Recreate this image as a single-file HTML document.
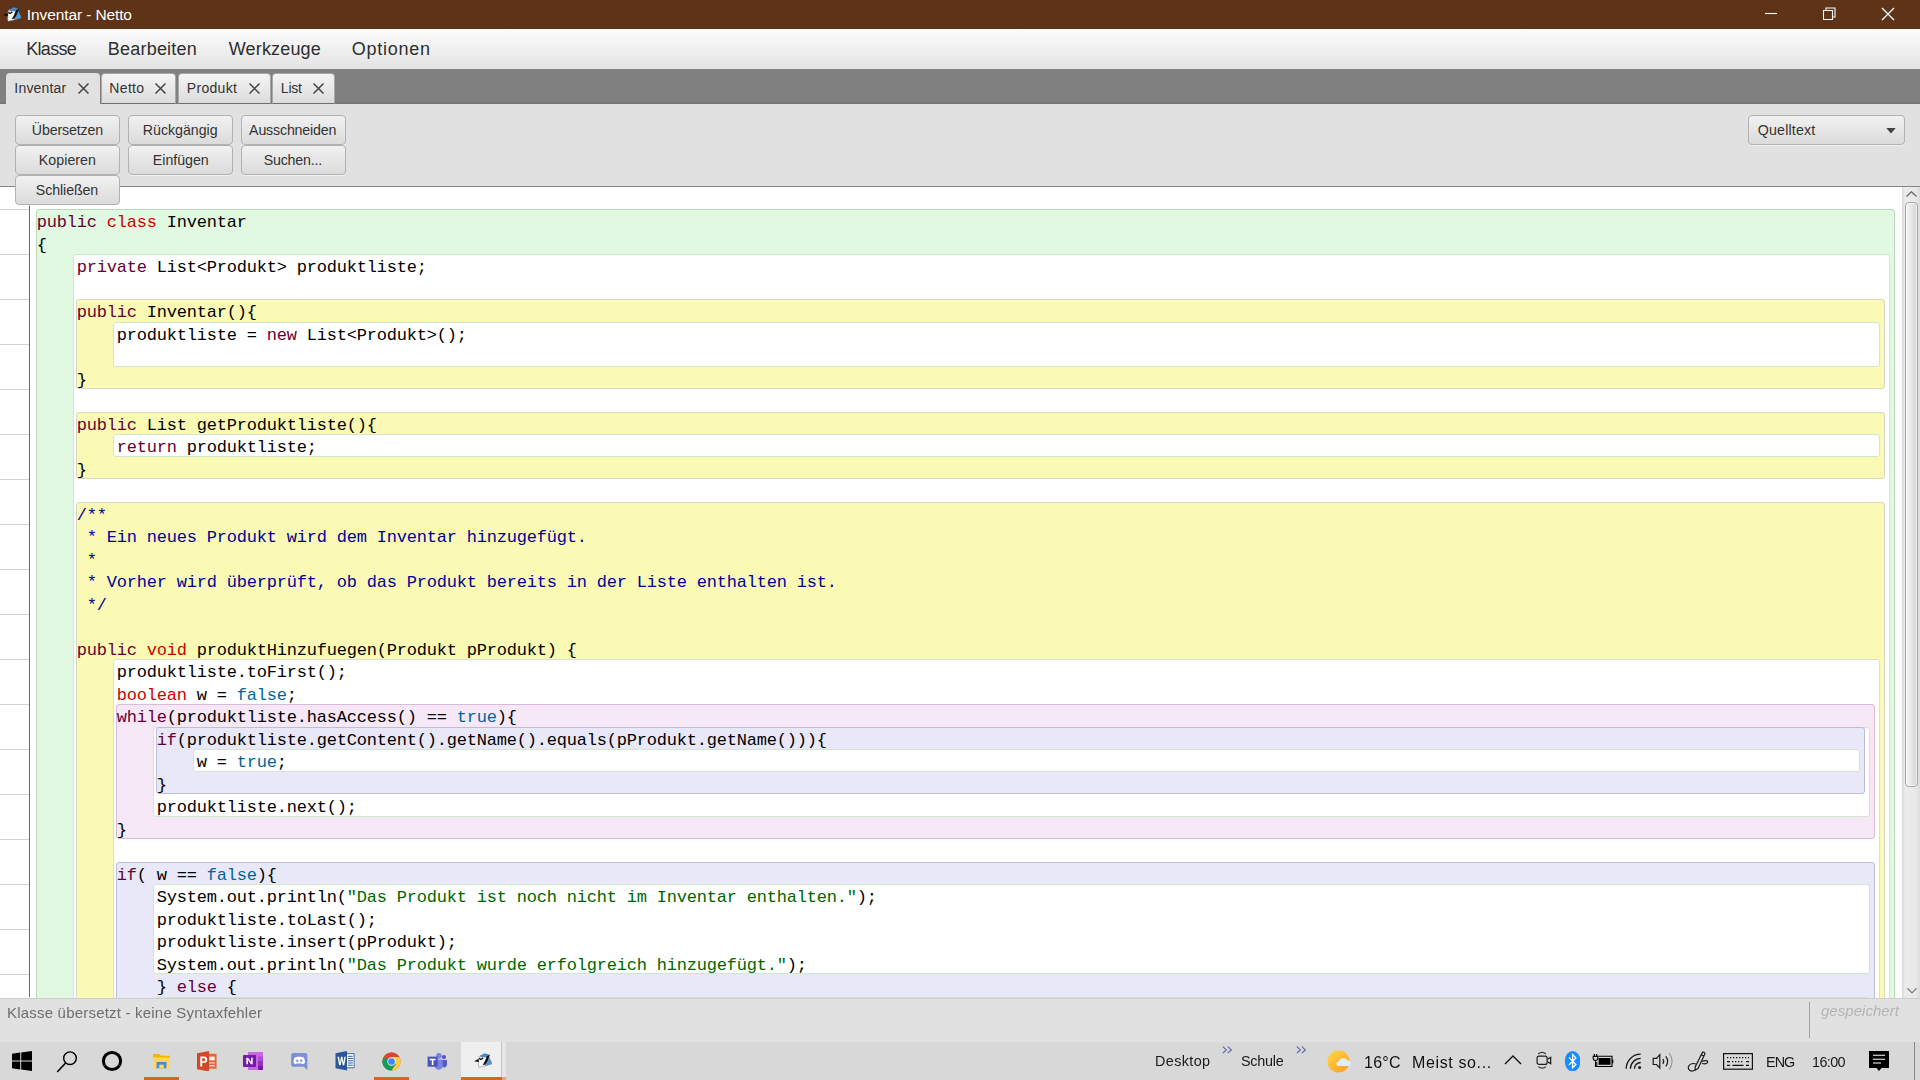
<!DOCTYPE html>
<html><head><meta charset="utf-8"><title>Inventar - Netto</title>
<style>
*{box-sizing:border-box;margin:0;padding:0}
html,body{width:1920px;height:1080px;overflow:hidden;background:#fff;font-family:"Liberation Sans",sans-serif}
.abs{position:absolute}
#title{position:absolute;left:0;top:0;width:1920px;height:29px;background:#5e3317;color:#fff}
#title .t{position:absolute;left:27px;top:4px;font-size:15.5px;line-height:20px;white-space:nowrap}
#menu{position:absolute;left:0;top:29px;width:1920px;height:40px;background:linear-gradient(#fdfdfd,#e3e3e3)}
#menu span{position:absolute;top:7px;font-size:18px;line-height:24px;color:#323232;white-space:nowrap}
#tabs{position:absolute;left:0;top:69px;width:1920px;height:35px;background:linear-gradient(#808080 33px,#757575 34px)}
.tab{position:absolute;top:4px;height:31px;border:1px solid #a8a8a8;border-bottom:1px solid #6e6e6e;border-radius:4px 4px 0 0;background:linear-gradient(#f4f4f4,#dcdcdc);font-size:13.5px;color:#3a3a3a;white-space:nowrap}
.tab.sel{background:#e1e1e1;border:none;height:32px}
.tab span{position:absolute;top:7px;line-height:16px}
.tab svg{position:absolute;top:9px}
.tab.sel svg{top:10px}
#tool{position:absolute;left:0;top:104px;width:1920px;height:83px;background:#e1e1e1;border-bottom:1px solid #858585}
.btn{position:absolute;width:105px;height:30px;border:1px solid #b2b2b2;border-radius:4px;background:linear-gradient(#f1f1f1,#dbdbdb);font-size:13.5px;color:#333;text-align:center;line-height:27px;white-space:nowrap;box-shadow:0 1px 0 rgba(255,255,255,.55)}
#editor{position:absolute;left:0;top:187px;width:1902px;height:811px;background:#fff;overflow:hidden}
#code{position:absolute;left:0;top:0;font-family:"Liberation Mono",monospace;font-size:17px;letter-spacing:-0.20166px;line-height:22.5px;white-space:pre;color:#000}
.ln{position:absolute;left:36.7px;height:22.5px}
.k1{color:#660033}.k2{color:#cc0000}.k3{color:#006699}.cm{color:#000099}.st{color:#006600}
.sc{position:absolute;border:1px solid;border-radius:3px}
#sb{position:absolute;left:1902px;top:187px;width:18px;height:811px;background:linear-gradient(90deg,#d8d8d8,#ececec 3px,#e8e8e8 14px,#dcdcdc);}
#thumb{position:absolute;left:3px;top:15px;width:13px;height:585px;border:1px solid #a6a6a6;border-radius:4px;box-shadow:inset 0 0 0 1px rgba(255,255,255,.65);background:linear-gradient(90deg,#f6f6f6,#e2e2e2 60%,#d6d6d6)}
#status{position:absolute;left:0;top:998px;width:1920px;height:44px;background:#e1e1e1;border-top:1px solid #cdcdcd}
#status .m{position:absolute;left:8px;top:6px;font-size:15px;line-height:18px;color:#6e6e6e;white-space:nowrap}
#status .s{position:absolute;left:1820px;top:4px;font-size:15px;line-height:18px;color:#b0b0b0;font-style:italic;white-space:nowrap}
#task{position:absolute;left:0;top:1040px;width:1920px;height:40px;background:linear-gradient(#e1e1e1 2px,#d8d8d8 2px)}
#task .tx{position:absolute;color:#1a1a1a;white-space:nowrap}
.fx{position:absolute;line-height:40px;white-space:pre;font-family:"Liberation Sans",sans-serif}
.g{-webkit-font-smoothing:antialiased;will-change:transform}
.ul{position:absolute;top:37px;height:3px;background:#cd6a27}
#root{position:absolute;left:0;top:0;width:1920px;height:1080px;overflow:hidden;background:#fff}
</style></head><body>
<div id="root">
<div id="title">
<svg class="abs" style="left:2.7px;top:7px" width="18.8" height="14.6" viewBox="0 0 18.6 14.6"><path d="M5.5 3.2 L9.5 2 L14.5 2.8 L12 8 L11 13 L4.8 14.2 L4.5 10 L5 9 L4.4 6.4 Z" fill="#fff" stroke="#777" stroke-width="0.5"/><path d="M5.7 3.1 L10.5 0.2 L15.6 1.8 L12.6 4.4 L7 3.9 Z" fill="#4a86c4"/><path d="M14.8 3 L18.6 11.1 L10.9 13.3 L12.2 8.5 Z" fill="#5b93c6"/><path d="M16.1 1.4 L15.1 3.8 L13.3 8.4 L11.1 11.5 L8.6 12.3 L11 8 L12.8 3.6 Z" fill="#0c0c0c"/><path d="M0 8.2 L4.4 6.1 L5 9 Z" fill="#0c0c0c"/><path d="M4.4 6.3 L6 4.5 L7 5.9 L8.4 4.2 L9.7 5.4 L8.5 6.3 L7 7.2 L5.6 6.4 Z" fill="#0c0c0c"/></svg>

<svg class="abs" style="left:1760px;top:0" width="160" height="29" viewBox="0 0 160 29" fill="none" stroke="#fff" stroke-width="1.1"><path d="M5 13.5 H17"/><path d="M63.5 10.5 H72.5 V19.5 H63.5 Z M66 10.5 V8 H75 V17 H72.5"/><path d="M122 8 L134 20 M134 8 L122 20" stroke-width="1.3"/></svg>
</div>
<div id="menu"></div>
<div id="tabs">
<div class="tab sel" style="left:6px;width:94px"><svg style="left:72px" width="11" height="11" viewBox="0 0 11 11"><path d="M0.5 0.5 L10.5 10.5 M10.5 0.5 L0.5 10.5" stroke="#444" stroke-width="1.5"/></svg></div>
<div class="tab" style="left:101px;width:75px"><svg style="left:53px" width="11" height="11" viewBox="0 0 11 11"><path d="M0.5 0.5 L10.5 10.5 M10.5 0.5 L0.5 10.5" stroke="#444" stroke-width="1.5"/></svg></div>
<div class="tab" style="left:178px;width:93px"><svg style="left:70px" width="11" height="11" viewBox="0 0 11 11"><path d="M0.5 0.5 L10.5 10.5 M10.5 0.5 L0.5 10.5" stroke="#444" stroke-width="1.5"/></svg></div>
<div class="tab" style="left:272px;width:63px"><svg style="left:40px" width="11" height="11" viewBox="0 0 11 11"><path d="M0.5 0.5 L10.5 10.5 M10.5 0.5 L0.5 10.5" stroke="#444" stroke-width="1.5"/></svg></div>
</div>
<div id="tool">
<div class="abs" style="left:1748px;top:11px;width:157px;height:30px;border:1px solid #b2b2b2;border-radius:4px;background:linear-gradient(#f1f1f1,#dbdbdb);font-size:13.5px;color:#333;line-height:28px;padding-left:9px;box-shadow:0 1px 0 rgba(255,255,255,.55)"><svg class="abs" style="left:137px;top:12px" width="10" height="6" viewBox="0 0 10 6"><path d="M0.3 0 H9.7 L5 5.6 Z" fill="#444"/></svg></div>
</div>
<div class="btn" style="left:15px;top:115px"></div>
<div class="btn" style="left:128px;top:115px"></div>
<div class="btn" style="left:241px;top:115px"></div>
<div class="btn" style="left:15px;top:145px"></div>
<div class="btn" style="left:128px;top:145px"></div>
<div class="btn" style="left:241px;top:145px"></div>
<div id="editor">
<div class="abs" style="left:0;top:22px;width:29px;height:1px;background:#d4d4d4"></div>
<div class="abs" style="left:0;top:67px;width:29px;height:1px;background:#d4d4d4"></div>
<div class="abs" style="left:0;top:112px;width:29px;height:1px;background:#d4d4d4"></div>
<div class="abs" style="left:0;top:157px;width:29px;height:1px;background:#d4d4d4"></div>
<div class="abs" style="left:0;top:202px;width:29px;height:1px;background:#d4d4d4"></div>
<div class="abs" style="left:0;top:247px;width:29px;height:1px;background:#d4d4d4"></div>
<div class="abs" style="left:0;top:292px;width:29px;height:1px;background:#d4d4d4"></div>
<div class="abs" style="left:0;top:337px;width:29px;height:1px;background:#d4d4d4"></div>
<div class="abs" style="left:0;top:382px;width:29px;height:1px;background:#d4d4d4"></div>
<div class="abs" style="left:0;top:427px;width:29px;height:1px;background:#d4d4d4"></div>
<div class="abs" style="left:0;top:472px;width:29px;height:1px;background:#d4d4d4"></div>
<div class="abs" style="left:0;top:517px;width:29px;height:1px;background:#d4d4d4"></div>
<div class="abs" style="left:0;top:562px;width:29px;height:1px;background:#d4d4d4"></div>
<div class="abs" style="left:0;top:607px;width:29px;height:1px;background:#d4d4d4"></div>
<div class="abs" style="left:0;top:652px;width:29px;height:1px;background:#d4d4d4"></div>
<div class="abs" style="left:0;top:697px;width:29px;height:1px;background:#d4d4d4"></div>
<div class="abs" style="left:0;top:742px;width:29px;height:1px;background:#d4d4d4"></div>
<div class="abs" style="left:0;top:787px;width:29px;height:1px;background:#d4d4d4"></div>
<div class="abs" style="left:29px;top:0;width:1px;height:810px;background:#6a6a6a"></div>
<div class="sc" style="left:36px;top:22px;width:1859px;height:900px;background:#e1f8e1;border-color:#b9d9b9"></div>
<div class="sc" style="left:73px;top:67px;width:1817px;height:855px;background:#ffffff;border-color:#cfe6cf"></div>
<div class="sc" style="left:76px;top:112px;width:1809px;height:90px;background:#fafab4;border-color:#d7d7c3"></div>
<div class="sc" style="left:113px;top:135px;width:1767px;height:45px;background:#ffffff;border-color:#cfe6cf"></div>
<div class="sc" style="left:76px;top:225px;width:1809px;height:67px;background:#fafab4;border-color:#d7d7c3"></div>
<div class="sc" style="left:113px;top:247px;width:1767px;height:23px;background:#ffffff;border-color:#cfe6cf"></div>
<div class="sc" style="left:76px;top:315px;width:1809px;height:607px;background:#fafab4;border-color:#d7d7c3"></div>
<div class="sc" style="left:113px;top:472px;width:1767px;height:450px;background:#ffffff;border-color:#cfe6cf"></div>
<div class="sc" style="left:116px;top:517px;width:1759px;height:135px;background:#f7e8f8;border-color:#d8bbd8"></div>
<div class="sc" style="left:153px;top:540px;width:1717px;height:90px;background:#ffffff;border-color:#cfe6cf"></div>
<div class="sc" style="left:156px;top:540px;width:1709px;height:67px;background:#e8e8f8;border-color:#bcbcdc"></div>
<div class="sc" style="left:193px;top:562px;width:1667px;height:23px;background:#ffffff;border-color:#cfe6cf"></div>
<div class="sc" style="left:116px;top:675px;width:1759px;height:247px;background:#e8e8f8;border-color:#bcbcdc"></div>
<div class="sc" style="left:153px;top:697px;width:1717px;height:90px;background:#ffffff;border-color:#cfe6cf"></div>
<div class="sc" style="left:153px;top:810px;width:1717px;height:112px;background:#ffffff;border-color:#cfe6cf"></div>
<div id="code"><div class="ln" style="top:25.20px"><span class="k1">public</span> <span class="k2">class</span> Inventar</div>
<div class="ln" style="top:47.70px">{</div>
<div class="ln" style="top:70.20px">    <span class="k1">private</span> List&lt;Produkt&gt; produktliste;</div>
<div class="ln" style="top:92.70px"></div>
<div class="ln" style="top:115.20px">    <span class="k1">public</span> Inventar(){</div>
<div class="ln" style="top:137.70px">        produktliste = <span class="k1">new</span> List&lt;Produkt&gt;();</div>
<div class="ln" style="top:160.20px"></div>
<div class="ln" style="top:182.70px">    }</div>
<div class="ln" style="top:205.20px"></div>
<div class="ln" style="top:227.70px">    <span class="k1">public</span> List getProduktliste(){</div>
<div class="ln" style="top:250.20px">        <span class="k1">return</span> produktliste;</div>
<div class="ln" style="top:272.70px">    }</div>
<div class="ln" style="top:295.20px"></div>
<div class="ln" style="top:317.70px"><span class="cm">    /**</span></div>
<div class="ln" style="top:340.20px"><span class="cm">     * Ein neues Produkt wird dem Inventar hinzugefügt.</span></div>
<div class="ln" style="top:362.70px"><span class="cm">     * </span></div>
<div class="ln" style="top:385.20px"><span class="cm">     * Vorher wird überprüft, ob das Produkt bereits in der Liste enthalten ist.</span></div>
<div class="ln" style="top:407.70px"><span class="cm">     */</span></div>
<div class="ln" style="top:430.20px"></div>
<div class="ln" style="top:452.70px">    <span class="k1">public</span> <span class="k2">void</span> produktHinzufuegen(Produkt pProdukt) {</div>
<div class="ln" style="top:475.20px">        produktliste.toFirst();</div>
<div class="ln" style="top:497.70px">        <span class="k2">boolean</span> w = <span class="k3">false</span>;</div>
<div class="ln" style="top:520.20px">        <span class="k1">while</span>(produktliste.hasAccess() == <span class="k3">true</span>){</div>
<div class="ln" style="top:542.70px">            <span class="k1">if</span>(produktliste.getContent().getName().equals(pProdukt.getName())){</div>
<div class="ln" style="top:565.20px">                w = <span class="k3">true</span>;</div>
<div class="ln" style="top:587.70px">            }</div>
<div class="ln" style="top:610.20px">            produktliste.next();</div>
<div class="ln" style="top:632.70px">        }</div>
<div class="ln" style="top:655.20px"></div>
<div class="ln" style="top:677.70px">        <span class="k1">if</span>( w == <span class="k3">false</span>){</div>
<div class="ln" style="top:700.20px">            System.out.println(<span class="st">"Das Produkt ist noch nicht im Inventar enthalten."</span>);</div>
<div class="ln" style="top:722.70px">            produktliste.toLast();</div>
<div class="ln" style="top:745.20px">            produktliste.insert(pProdukt);</div>
<div class="ln" style="top:767.70px">            System.out.println(<span class="st">"Das Produkt wurde erfolgreich hinzugefügt."</span>);</div>
<div class="ln" style="top:790.20px">            } <span class="k1">else</span> {</div>
<div class="ln" style="top:812.70px">                System.out.println(<span class="st">"x"</span>);</div></div>
</div>
<div class="btn" style="left:15px;top:175px"></div>
<div id="sb">
<svg class="abs" style="left:4px;top:4px" width="11" height="6" viewBox="0 0 11 6"><path d="M0.5 5.5 L5.5 0.7 L10.5 5.5" fill="none" stroke="#666" stroke-width="1.2"/></svg>
<div id="thumb"></div>
<svg class="abs" style="left:4.5px;top:801px" width="10" height="5.5" viewBox="0 0 11 6"><path d="M0.5 0.5 L5.5 5.3 L10.5 0.5" fill="none" stroke="#666" stroke-width="1.2"/></svg>
</div>
<div id="status"><div class="abs" style="left:1809px;top:3px;width:1px;height:36px;background:#a4a4a4"></div></div>
<div id="task">
<div class="abs" style="left:461px;top:2px;width:41px;height:38px;background:#efefef;border-right:1px solid #c4c4c4"></div>
<div class="abs" style="left:502px;top:2px;width:4px;height:38px;background:#e6e6e6"></div>
<div class="ul" style="left:144px;width:35px"></div>
<div class="ul" style="left:374px;width:35px"></div>
<div class="ul" style="left:461px;width:41px"></div><div class="ul" style="left:502px;width:4px;background:#e9a378"></div>
<!-- start -->
<svg class="abs" style="left:12px;top:11px" width="20" height="20" viewBox="0 0 20 20"><path d="M0 2.8 L8.2 1.6 V9.5 H0 Z M9.2 1.5 L20 0 V9.5 H9.2 Z M0 10.5 H8.2 V18.4 L0 17.2 Z M9.2 10.5 H20 V20 L9.2 18.5 Z" fill="#000"/></svg>
<!-- search -->
<svg class="abs" style="left:56px;top:10px" width="22" height="23" viewBox="0 0 22 23"><circle cx="14" cy="8.2" r="6.3" fill="none" stroke="#000" stroke-width="1.4"/><path d="M9.6 13 L1.2 22" stroke="#000" stroke-width="1.6"/></svg>
<!-- cortana -->
<svg class="abs" style="left:101px;top:10px" width="22" height="22" viewBox="0 0 22 22"><circle cx="11" cy="11" r="8.6" fill="none" stroke="#000" stroke-width="3"/></svg>
<!-- explorer -->
<svg class="abs" style="left:151.5px;top:12.5px" width="19" height="17" viewBox="0 0 21 19"><path d="M1 1 H8 L10 3 H20 V17 H1 Z" fill="#f4b400"/><path d="M1 5 H20 V17 H1 Z" fill="#ffd75e"/><path d="M5 10 H16 V17 H5 Z" fill="#3a8ee6"/><path d="M8 13 H13 V17 H8 Z" fill="#ffd75e"/></svg>
<!-- powerpoint -->
<svg class="abs" style="left:197px;top:10.5px" width="20.5" height="20.5" viewBox="0 0 22 22"><path d="M11 3 H21 V19 H11 Z" fill="#e8623a"/><path d="M13 6 H19 V10 H13 Z" fill="#fff" opacity=".9"/><path d="M13 12 H19 V13.5 H13 Z M13 15 H19 V16.5 H13 Z" fill="#fff" opacity=".8"/><path d="M0 2.5 L13 0 V22 L0 19.5 Z" fill="#d24726"/><path d="M3.5 6 H7.5 C10 6 11 7.5 11 9.3 C11 11.3 9.7 12.7 7.5 12.7 H5.6 V16.5 H3.5 Z M5.6 7.8 V10.9 H7.2 C8.3 10.9 8.8 10.2 8.8 9.3 C8.8 8.4 8.3 7.8 7.2 7.8 Z" fill="#fff"/></svg>
<!-- onenote -->
<svg class="abs" style="left:243px;top:12px" width="20" height="18" viewBox="0 0 20 18"><path d="M5 0 H20 V18 H5 Z" fill="#c768e0"/><path d="M15 0 H20 V4.5 H15 Z" fill="#ca64ea"/><path d="M15 4.5 H20 V9 H15 Z" fill="#ae4bd5"/><path d="M15 9 H20 V13.5 H15 Z" fill="#9332bf"/><path d="M15 13.5 H20 V18 H15 Z" fill="#7719aa"/><rect x="0" y="3" width="13" height="12" rx="0.8" fill="#7719aa"/><path d="M3.3 12.3 V5.7 H5.2 L8 10 V5.7 H9.7 V12.3 H7.9 L5 8 V12.3 Z" fill="#fff"/></svg>
<!-- discord -->
<svg class="abs" style="left:291px;top:13px" width="16.5" height="17" viewBox="0 0 20 21"><path d="M2.5 0 H17.5 C19 0 20 1 20 2.5 V21 L15.5 17 H2.5 C1 17 0 16 0 14.5 V2.5 C0 1 1 0 2.5 0 Z" fill="#7f8fd6"/><path d="M4.5 5.5 C6.5 4.3 13.5 4.3 15.5 5.5 C16.8 7.5 17.2 10 17 12.3 C15.8 13.2 14.8 13.6 13.8 13.8 L13 12.6 C11.2 13.1 8.8 13.1 7 12.6 L6.2 13.8 C5.2 13.6 4.2 13.2 3 12.3 C2.8 10 3.2 7.5 4.5 5.5 Z" fill="#fff"/><ellipse cx="7.6" cy="9.6" rx="1.4" ry="1.6" fill="#7f8fd6"/><ellipse cx="12.4" cy="9.6" rx="1.4" ry="1.6" fill="#7f8fd6"/></svg>
<!-- word -->
<svg class="abs" style="left:334.5px;top:11px" width="20.5" height="19.5" viewBox="0 0 22 22"><path d="M11 3 H21 V19 H11 Z" fill="#fff" stroke="#2b579a" stroke-width="1"/><path d="M14 6 H19.5 M14 8.5 H19.5 M14 11 H19.5 M14 13.5 H19.5 M14 16 H19.5" stroke="#2b579a" stroke-width="1.1"/><path d="M0 2.5 L13 0 V22 L0 19.5 Z" fill="#2b579a"/><path d="M2.2 6.5 H4 L5 13 L6.2 6.5 H7.8 L9 13 L10 6.5 H11.6 L9.9 16 H8.2 L7 9.8 L5.8 16 H4.1 Z" fill="#fff"/></svg>
<!-- chrome -->
<svg class="abs" style="left:381.5px;top:11.5px" width="19" height="19" viewBox="0 0 22 22"><circle cx="11" cy="11" r="10.5" fill="#db4437"/><path d="M11 11 L1.9 5.75 A10.5 10.5 0 0 0 11 21.5 L16.2 14 Z" fill="#0f9d58"/><path d="M11 11 L16.2 14 L11 21.5 A10.5 10.5 0 0 0 20.1 5.75 H11 Z" fill="#ffcd40"/><path d="M11 11 L1.9 5.75 A10.5 10.5 0 0 1 20.1 5.75 H11 Z" fill="#db4437"/><circle cx="11" cy="11" r="4.9" fill="#f1f1f1"/><circle cx="11" cy="11" r="3.9" fill="#4285f4"/></svg>
<!-- teams -->
<svg class="abs" style="left:427px;top:12px" width="20.5" height="18.5" viewBox="0 0 23 22"><circle cx="19.5" cy="6" r="2.5" fill="#5059c9"/><path d="M16.5 9.5 H23 V15 C23 17.5 21 18.5 19.5 18.5 C18 18.5 16.5 17.5 16.5 15 Z" fill="#5059c9"/><circle cx="13.5" cy="4.5" r="3.4" fill="#7b83eb"/><path d="M8.5 9 H18 V16 C18 19.5 15.5 21 13.2 21 C11 21 8.5 19.5 8.5 16 Z" fill="#7b83eb"/><path d="M0 5.5 H12 V17.5 H0 Z" fill="#4b53bc"/><path d="M2.5 8 H9.5 V9.8 H7 V15.5 H5 V9.8 H2.5 Z" fill="#fff"/></svg>
<!-- bluej -->
<svg class="abs" style="left:473.5px;top:13.3px" width="18.6" height="14.6" viewBox="0 0 18.6 14.6"><path d="M5.5 3.2 L9.5 2 L14.5 2.8 L12 8 L11 13 L4.8 14.2 L4.5 10 L5 9 L4.4 6.4 Z" fill="#fff" stroke="#777" stroke-width="0.5"/><path d="M5.7 3.1 L10.5 0.2 L15.6 1.8 L12.6 4.4 L7 3.9 Z" fill="#4a86c4"/><path d="M14.8 3 L18.6 11.1 L10.9 13.3 L12.2 8.5 Z" fill="#5b93c6"/><path d="M16.1 1.4 L15.1 3.8 L13.3 8.4 L11.1 11.5 L8.6 12.3 L11 8 L12.8 3.6 Z" fill="#0c0c0c"/><path d="M0 8.2 L4.4 6.1 L5 9 Z" fill="#0c0c0c"/><path d="M4.4 6.3 L6 4.5 L7 5.9 L8.4 4.2 L9.7 5.4 L8.5 6.3 L7 7.2 L5.6 6.4 Z" fill="#0c0c0c"/></svg>
<!-- right side -->
<svg class="abs" style="left:1221.5px;top:5.5px" width="11" height="8" viewBox="0 0 11 8" fill="none" stroke="#5f5fae" stroke-width="1.1"><path d="M0.8 0.6 L4.4 3.9 L0.8 7.2 M5.8 0.6 L9.4 3.9 L5.8 7.2"/></svg>
<svg class="abs" style="left:1295.5px;top:5.5px" width="11" height="8" viewBox="0 0 11 8" fill="none" stroke="#5f5fae" stroke-width="1.1"><path d="M0.8 0.6 L4.4 3.9 L0.8 7.2 M5.8 0.6 L9.4 3.9 L5.8 7.2"/></svg>
<svg class="abs" style="left:1327px;top:9px" width="27" height="25" viewBox="0 0 27 25"><defs><linearGradient id="sun" x1="0" y1="0" x2="1" y2="1"><stop offset="0" stop-color="#ffd84a"/><stop offset="1" stop-color="#ff9a1a"/></linearGradient></defs><circle cx="11.5" cy="12.5" r="11" fill="url(#sun)"/><path d="M12 17 C8.5 17 8.5 12.5 12 12.5 C12.5 8.5 18.5 7.5 20.5 11.5 C25 11.5 25 17 21 17 Z" fill="#dfeefa"/></svg>
<svg class="abs" style="left:1504px;top:15px" width="18" height="10" viewBox="0 0 18 10"><path d="M1 9 L9 1 L17 9" fill="none" stroke="#111" stroke-width="1.4"/></svg>
<!-- camera -->
<svg class="abs" style="left:1535px;top:11px" width="17" height="19" viewBox="0 0 17 19" fill="none" stroke="#1c1c1c" stroke-width="1.2"><rect x="2.1" y="5.1" width="10" height="8.3" rx="2"/><path d="M12.5 8.3 L15.7 6.4 V12.6 L12.5 10.7"/><path d="M3.2 3 Q7.1 -0.2 11 3 M3.2 15.6 Q7.1 18.8 11 15.6" stroke="#333"/></svg>
<!-- bluetooth -->
<svg class="abs" style="left:1565.3px;top:10.7px" width="15.2" height="20.4" viewBox="0 0 15 20"><rect x="0" y="0" width="15" height="20" rx="7.5" ry="9" fill="#1a8cff"/><path d="M3.9 6.2 L10.8 13.2 L7.5 16.5 V3.5 L10.8 6.8 L3.9 13.8" fill="none" stroke="#fff" stroke-width="1.25"/></svg>
<!-- battery -->
<svg class="abs" style="left:1592px;top:13px" width="22" height="15" viewBox="0 0 22 15"><path d="M2.3 1 V3.4 M4.7 1 V3.4 M1.2 3.4 H5.8 V5.2 Q5.8 7.4 3.5 7.4 Q1.2 7.4 1.2 5.2 Z M3.5 7.4 V13.5 H5" fill="none" stroke="#000" stroke-width="1.1"/><path d="M6.3 3.3 H20 V13.5 H4.8 V9" fill="none" stroke="#000" stroke-width="1.1"/><rect x="6.6" y="5" width="11.9" height="6.8" fill="#000"/><rect x="20" y="6.5" width="1.3" height="3.8" fill="#000"/></svg>
<!-- wifi -->
<svg class="abs" style="left:1625px;top:13px" width="17" height="17" viewBox="0 0 17 17" fill="none" stroke="#1a1a1a" stroke-width="1.3"><path d="M1.2 15.7 A14.5 14.5 0 0 1 15.7 1.2"/><path d="M5.4 15.7 A10.3 10.3 0 0 1 15.7 5.4"/><path d="M9.5 15.7 A6.2 6.2 0 0 1 15.7 9.5"/><circle cx="14.6" cy="14.5" r="1.5" fill="#1a1a1a" stroke="none"/></svg>
<!-- volume -->
<svg class="abs" style="left:1652px;top:12px" width="23" height="19" viewBox="0 0 23 19" fill="none" stroke="#1a1a1a" stroke-width="1.2"><path d="M1.2 6.3 H4.6 L7.8 2.6 V16 L4.6 12.5 H1.2 Z"/><path d="M10.8 7 Q12.6 9.3 10.8 11.8"/><path d="M13.8 4.4 Q17.6 9.3 13.8 14.4"/><path d="M17.2 1 Q23 9.3 17.2 17.6" stroke="#9a9a9a"/></svg>
<!-- pen -->
<svg class="abs" style="left:1687px;top:10.5px" width="22" height="21" viewBox="0 0 22 21" fill="none" stroke="#1a1a1a" stroke-width="1.2"><path d="M15.5 1.2 Q17.5 0.8 18 2.8 L11 17.5 L8.2 19 L8.2 16 Z M14.2 3.6 L16.8 5"/><path d="M8.2 19 C4 21.5 0.5 19 1.5 15.5 C2.5 12.5 6.5 12 9 13"/><path d="M14.5 10.5 C18 9.5 21.5 9 20.5 11.5 C19.8 13 17 13 15 12.5"/></svg>
<!-- keyboard -->
<svg class="abs" style="left:1723px;top:13px" width="30" height="17" viewBox="0 0 30 17" fill="none" stroke="#111" stroke-width="1.2"><rect x="0.6" y="0.6" width="28.8" height="15.6"/><path d="M4 4.7 H26" stroke-dasharray="1.3 1.7"/><path d="M4 8.6 H7 M23 8.6 H26 M4 12.4 H7 M9.5 12.4 H20.5 M23 12.4 H26"/><path d="M9 8.6 H21" stroke-dasharray="1.3 1.7"/></svg>
<svg class="abs" style="left:1869px;top:11px" width="20" height="20" viewBox="0 0 20 20"><path d="M0 0 H20 V17 H12.5 L10 20 L7.5 17 H0 Z" fill="#000"/><path d="M4 4.3 H16 M4 8.2 H16 M4 12 H12" stroke="#fff" stroke-width="1.1"/></svg>
<div class="abs" style="left:1914px;top:2px;width:1px;height:38px;background:#8a8a8a"></div>

</div>
<div class="fx" style="left:26.85px;top:-5px;font-size:15.5px;letter-spacing:-0.113px;color:#fff;">Inventar - Netto</div>
<div class="fx" style="left:26.35px;top:29px;font-size:18px;letter-spacing:-0.740px;color:#2e2e2e;">Klasse</div>
<div class="fx" style="left:107.85px;top:29px;font-size:18px;letter-spacing:0.200px;color:#2e2e2e;">Bearbeiten</div>
<div class="fx" style="left:228.75px;top:29px;font-size:18px;letter-spacing:0.162px;color:#2e2e2e;">Werkzeuge</div>
<div class="fx" style="left:351.75px;top:29px;font-size:18px;letter-spacing:0.743px;color:#2e2e2e;">Optionen</div>
<div class="fx" style="left:14.35px;top:68px;font-size:14px;letter-spacing:0.186px;color:#333;">Inventar</div>
<div class="fx" style="left:109.35px;top:68px;font-size:14px;letter-spacing:0.325px;color:#333;">Netto</div>
<div class="fx" style="left:186.85px;top:68px;font-size:14px;letter-spacing:0.300px;color:#333;">Produkt</div>
<div class="fx" style="left:280.85px;top:68px;font-size:14px;letter-spacing:-0.233px;color:#333;">List</div>
<div class="fx" style="left:31.85px;top:110px;font-size:14.2px;letter-spacing:-0.133px;color:#333;">Übersetzen</div>
<div class="fx" style="left:142.85px;top:110px;font-size:14.2px;letter-spacing:-0.022px;color:#333;">Rückgängig</div>
<div class="fx" style="left:249.10px;top:110px;font-size:14.2px;letter-spacing:-0.168px;color:#333;">Ausschneiden</div>
<div class="fx" style="left:38.85px;top:140px;font-size:14.2px;letter-spacing:0.043px;color:#333;">Kopieren</div>
<div class="fx" style="left:152.85px;top:140px;font-size:14.2px;letter-spacing:-0.014px;color:#333;">Einfügen</div>
<div class="fx" style="left:263.75px;top:140px;font-size:14.2px;letter-spacing:-0.200px;color:#333;">Suchen...</div>
<div class="fx" style="left:35.85px;top:170px;font-size:14.2px;letter-spacing:-0.087px;color:#333;">Schließen</div>
<div class="fx" style="left:1757.85px;top:110px;font-size:14.2px;letter-spacing:0.163px;color:#333;">Quelltext</div>
<div class="fx g" style="left:7.35px;top:993px;font-size:15px;letter-spacing:0.203px;color:#6e6e6e;">Klasse übersetzt - keine Syntaxfehler</div>
<div class="fx g" style="left:1821.35px;top:991px;font-size:15px;letter-spacing:0.030px;color:#b4b4b4;font-style:italic;">gespeichert</div>
<div class="fx g" style="left:1155.35px;top:1041px;font-size:14.4px;letter-spacing:0.383px;color:#1a1a1a;">Desktop</div>
<div class="fx g" style="left:1241.35px;top:1041px;font-size:14.4px;letter-spacing:-0.260px;color:#1a1a1a;">Schule</div>
<div class="fx g" style="left:1364.35px;top:1043px;font-size:16px;letter-spacing:0.267px;color:#111;">16°C</div>
<div class="fx g" style="left:1412.35px;top:1043px;font-size:16px;letter-spacing:0.630px;color:#111;">Meist so...</div>
<div class="fx g" style="left:1765.85px;top:1042px;font-size:14.4px;letter-spacing:-0.950px;color:#1a1a1a;">ENG</div>
<div class="fx g" style="left:1811.85px;top:1042px;font-size:14.4px;letter-spacing:-0.625px;color:#1a1a1a;">16:00</div>
</div>
</body></html>
